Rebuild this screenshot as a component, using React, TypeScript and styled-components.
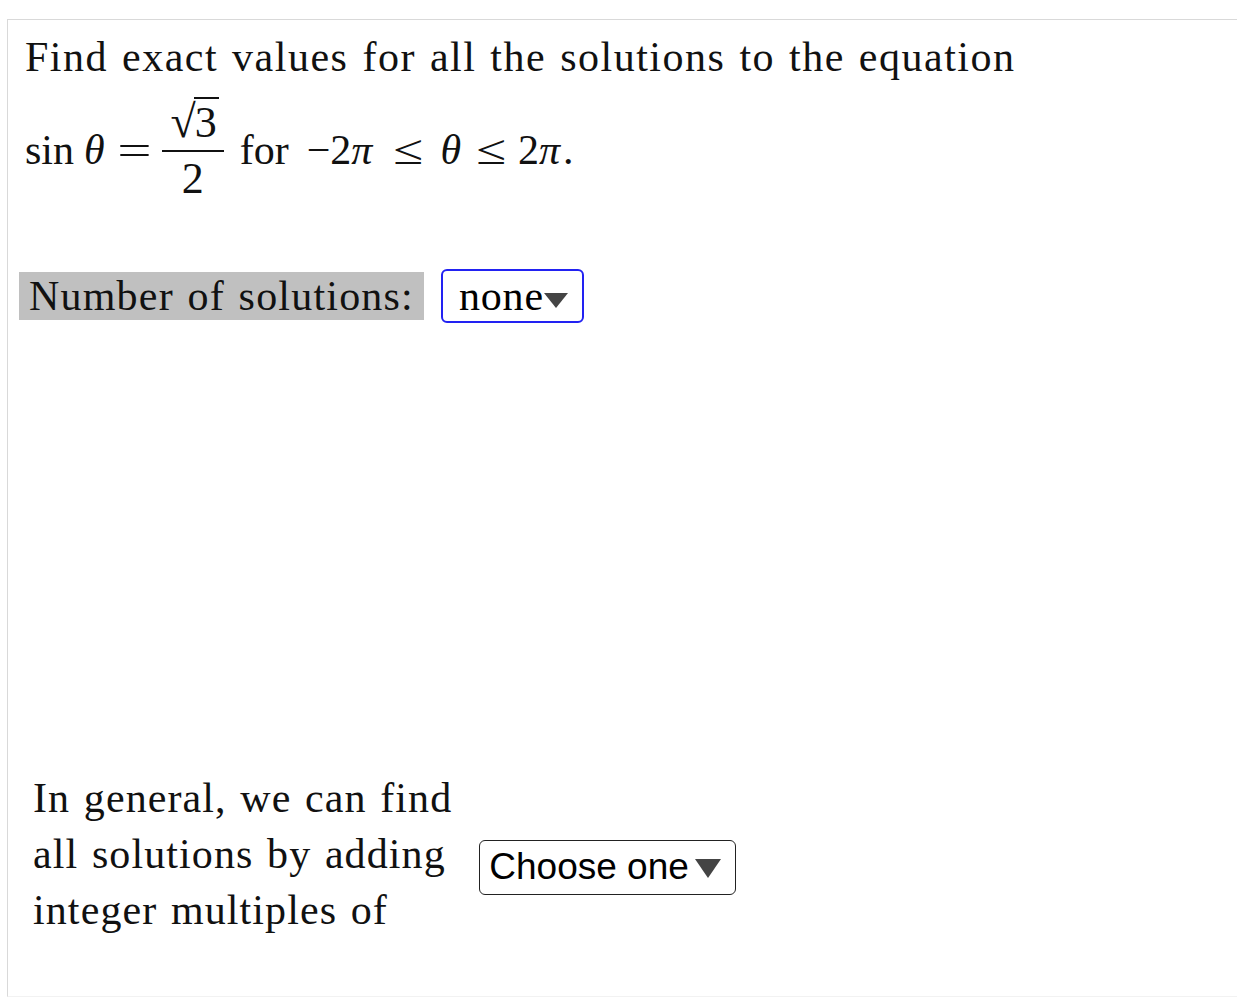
import React from 'react'
import styled, { createGlobalStyle } from 'styled-components'

const GlobalStyle = createGlobalStyle`
  html, body {
    margin: 0;
    padding: 0;
    background: #ffffff;
  }
  body {
    font-family: "Liberation Serif", "Times New Roman", serif;
    color: #111;
  }
`

const Panel = styled.div`
  margin: 19px 0 0 7px;
  height: 978px;
  box-sizing: border-box;
  border-top: 1px solid #d9d9d9;
  border-left: 1px solid #d9d9d9;
  border-bottom: 1px solid #f2f2f2;
  padding: 12px 0 0 17px;
  font-size: 42px;
  line-height: 1.2;
`

const Prompt = styled.p`
  margin: 0;
  letter-spacing: 1.5px;
  word-spacing: 2px;
`

const MathLine = styled.div`
  display: flex;
  align-items: center;
  margin-top: 15px;
  white-space: nowrap;
`

const Italic = styled.span<{ $gap?: number }>`
  font-style: italic;
  margin-left: ${p => p.$gap ?? 0}px;
`

const Word = styled.span<{ $gap?: number }>`
  margin-left: ${p => p.$gap ?? 0}px;
`

// relation signs are drawn wider than the text face gives them
const Rel = styled.span<{ $gap: number; $w: number; $sx: number }>`
  display: inline-block;
  width: ${p => p.$w}px;
  margin-left: ${p => p.$gap}px;
  text-align: center;
  transform: scaleX(${p => p.$sx});
`

const Fraction = styled.span`
  display: inline-flex;
  flex-direction: column;
  align-items: stretch;
  width: 62px;
  margin-left: 10px;
  padding-bottom: 2px;
  line-height: 1;
  font-size: 44px;
`

const Numerator = styled.span`
  display: flex;
  justify-content: center;
  align-items: flex-end;
  padding: 0 0 5px 4px;
`

const Radical = styled.span`
  font-size: 46px;
  line-height: 1;
  margin-right: -2px;
`

const Radicand = styled.span`
  border-top: 2px solid #111;
  padding: 2px 2px 0 1px;
`

const Denominator = styled.span`
  border-top: 2px solid #111;
  text-align: center;
  padding-top: 5px;
`

const AnswerRow = styled.div`
  display: flex;
  align-items: center;
  gap: 17px;
  margin: 66px 0 0 -6px;
`

const Label = styled.span`
  background: #c0c0c0;
  padding: 0 10px;
  height: 48px;
  line-height: 48px;
  letter-spacing: 1.2px;
  word-spacing: 2px;
`

const Select = styled.span<{ $sans?: boolean; $blue?: boolean }>`
  display: inline-flex;
  align-items: center;
  box-sizing: border-box;
  height: ${p => (p.$blue ? 54 : 55)}px;
  padding: ${p => (p.$blue ? '0 14px 0 16px' : '0 14px 0 9px')};
  margin-top: ${p => (p.$blue ? 0 : 26)}px;
  border: ${p => (p.$blue ? '2px solid #2222f2' : '1.5px solid #222')};
  border-radius: 6px;
  background: #fff;
  font-family: ${p => (p.$sans ? '"Liberation Sans", Arial, sans-serif' : 'inherit')};
  font-size: ${p => (p.$sans ? 37 : 42)}px;
  letter-spacing: ${p => (p.$sans ? 0 : 0.8)}px;
  color: #000;
`

const Arrow = styled.svg<{ $gap: number; $drop: number }>`
  margin-left: ${p => p.$gap}px;
  position: relative;
  top: ${p => p.$drop}px;
  flex: none;
`

const Triangle = ({ w, h, gap, drop }: { w: number; h: number; gap: number; drop: number }) => (
  <Arrow $gap={gap} $drop={drop} width={w} height={h} viewBox={`0 0 ${w} ${h}`}>
    <polygon points={`0,0 ${w},0 ${w / 2},${h}`} fill="#444" />
  </Arrow>
)

const GeneralRow = styled.div`
  display: flex;
  align-items: center;
  gap: 27px;
  margin: 447px 0 0 8px;
`

const GeneralText = styled.div`
  line-height: 56px;
  letter-spacing: 1.1px;
  word-spacing: 2px;
`

export default function App() {
  return (
    <>
      <GlobalStyle />
      <Panel>
        <Prompt>Find exact values for all the solutions to the equation</Prompt>
        <MathLine>
          <span>sin</span>
          <Italic $gap={10}>θ</Italic>
          <Rel $gap={12} $w={35} $sx={1.45}>=</Rel>
          <Fraction>
            <Numerator>
              <Radical>√</Radical>
              <Radicand>3</Radicand>
            </Numerator>
            <Denominator>2</Denominator>
          </Fraction>
          <Word $gap={16}>for</Word>
          <Word $gap={18}>−2</Word>
          <Italic>π</Italic>
          <Rel $gap={21} $w={30} $sx={1.3}>≤</Rel>
          <Italic $gap={17}>θ</Italic>
          <Rel $gap={15} $w={30} $sx={1.3}>≤</Rel>
          <Word $gap={12}>2</Word>
          <Italic>π</Italic>
          <Word $gap={3}>.</Word>
        </MathLine>
        <AnswerRow>
          <Label>Number of solutions:</Label>
          <Select $blue>
            none
            <Triangle w={24} h={15} gap={0} drop={4} />
          </Select>
        </AnswerRow>
        <GeneralRow>
          <GeneralText>
            In general, we can find
            <br />
            all solutions by adding
            <br />
            integer multiples of
          </GeneralText>
          <Select $sans>
            Choose one
            <Triangle w={26} h={19} gap={6} drop={1} />
          </Select>
        </GeneralRow>
      </Panel>
    </>
  )
}
